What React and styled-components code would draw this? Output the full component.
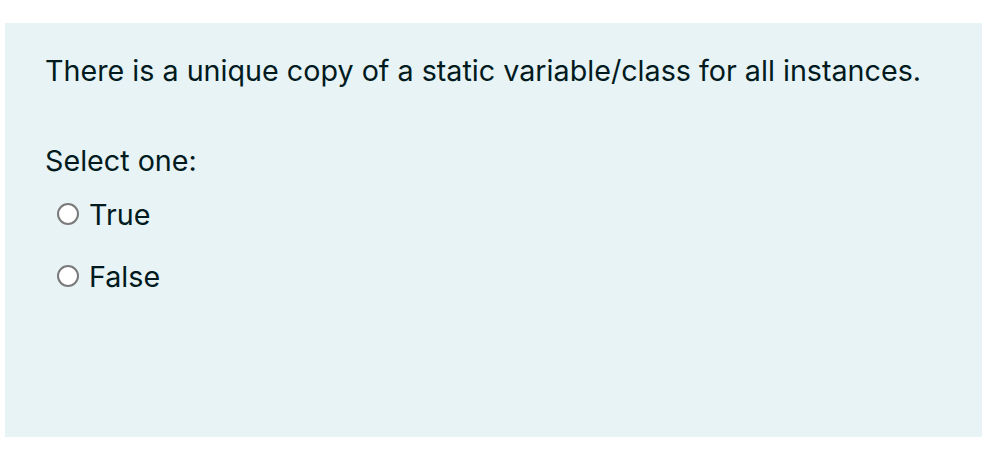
import React from "react";
import styled, { createGlobalStyle } from "styled-components";

const Global = createGlobalStyle`
  html, body { margin: 0; padding: 0; background: #ffffff; }
  body { font-family: Inter, "Liberation Sans", sans-serif; color: #001a1e; }
`;

const Page = styled.div`
  padding: 23px 20px 0 5px;
`;

const Panel = styled.div`
  background: #e7f3f5;
  height: 414px;
  box-sizing: border-box;
  padding: 28px 40px 0 40px;
`;

const Question = styled.p`
  margin: 0;
  font-size: 28.7px;
  line-height: 40px;
`;

const Prompt = styled.div`
  margin-top: 50px;
  font-size: 28.7px;
  line-height: 40px;
`;

const Options = styled.div`
  display: flex;
  flex-direction: column;
  gap: 22px;
  margin-top: 14px;
`;

const Option = styled.label`
  display: flex;
  align-items: center;
  gap: 10px;
  padding-left: 12px;
  font-size: 28.7px;
  line-height: 40px;
`;

const Radio = styled.span`
  width: 22px;
  height: 22px;
  box-sizing: border-box;
  border-radius: 50%;
  border: 2px solid #7a7a7a;
  background: #ffffff;
  flex-shrink: 0;
  margin-top: -2px;
`;

export default function App() {
  return (
    <>
      <Global />
      <Page>
        <Panel>
          <Question>There is a unique copy of a static variable/class for all instances.</Question>
          <Prompt>Select one:</Prompt>
          <Options>
            <Option><Radio />True</Option>
            <Option><Radio />False</Option>
          </Options>
        </Panel>
      </Page>
    </>
  );
}
